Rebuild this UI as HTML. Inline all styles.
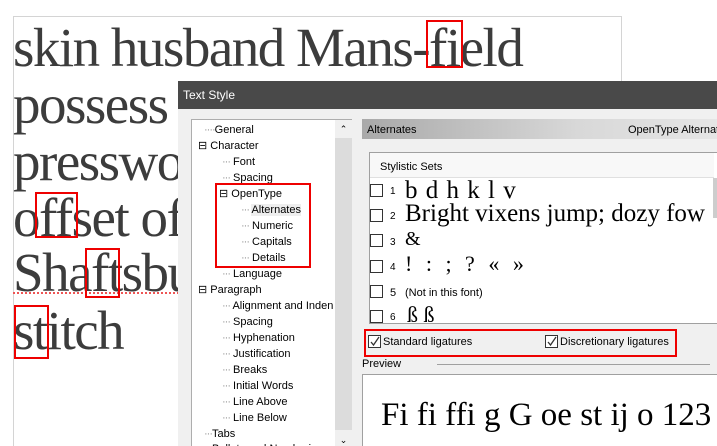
<!DOCTYPE html>
<html><head><style>
*{margin:0;padding:0;box-sizing:border-box}
html,body{width:717px;height:446px;overflow:hidden}
body{background:#fff;position:relative;font-family:"Liberation Sans",sans-serif}
.a{position:absolute;white-space:nowrap}
.doc{left:13px;top:16px;width:609px;height:440px;border:1px solid #d4d4d4;background:#fff}
.big{font-family:"Liberation Serif",serif;font-size:55px;color:#3c3c3c;letter-spacing:-1.5px;left:13px;line-height:1}
.red{border:2px solid #e00;position:absolute}
.dlg{left:178px;top:81px;width:560px;height:380px;background:#f0f0f0}
.tb{left:178px;top:81px;width:560px;height:28px;background:#494949;color:#fff;font-size:12px;padding:7px 0 0 5px}
.tree{left:191px;top:119px;width:161px;height:340px;background:#fff;border:1px solid #adadad}
.t{font-size:11px;color:#000;position:absolute;line-height:14px;white-space:nowrap}
.cb{position:absolute;width:13px;height:13px;border:1px solid #333;background:#fff}
.ser{font-family:"Liberation Serif",serif;color:#000}
.d{color:#999;letter-spacing:-1px}
</style></head><body>
<div class="a doc"></div>
<div class="a big" style="top:20px">skin husband Mans-field</div>
<div class="a big" style="top:77px">possess I</div>
<div class="a big" style="top:134px">presswo</div>
<div class="a big" style="top:190px">offset of</div>
<div class="a big" style="top:245px">Shaftsbu</div>
<div class="a big" style="top:303px">stitch</div>
<div class="a" style="left:13px;top:292px;width:166px;border-top:2px dotted #e55"></div>
<div class="red" style="left:426px;top:20px;width:37px;height:48px"></div>
<div class="red" style="left:35px;top:192px;width:43px;height:46px"></div>
<div class="red" style="left:85px;top:248px;width:35px;height:50px"></div>
<div class="red" style="left:14px;top:305px;width:35px;height:54px"></div>

<div class="a dlg"></div>
<div class="a tb">Text Style</div>
<div class="a tree">
 <div style="position:absolute;left:143px;top:0;width:17px;height:338px;background:#dcdcdc"></div>
 <div style="position:absolute;left:143px;top:0;width:17px;height:18px;background:#f0f0f0;font-size:9px;text-align:center;line-height:18px">&#8963;</div>
 <div style="position:absolute;left:143px;top:310px;width:17px;height:20px;background:#f0f0f0;font-size:9px;text-align:center;line-height:20px">&#8964;</div>
</div>
<div class="t" style="left:204px;top:123px"><span class="d">····</span>General</div>
<div class="t" style="left:198px;top:139px">⊟ Character</div>
<div class="t" style="left:222px;top:155px"><span class="d">···</span> Font</div>
<div class="t" style="left:222px;top:171px"><span class="d">···</span> Spacing</div>
<div class="t" style="left:219px;top:187px">⊟ OpenType</div>
<div class="t" style="left:241px;top:203px"><span class="d">···</span> <span style="background:#eee">Alternates</span></div>
<div class="t" style="left:241px;top:219px"><span class="d">···</span> Numeric</div>
<div class="t" style="left:241px;top:235px"><span class="d">···</span> Capitals</div>
<div class="t" style="left:241px;top:251px"><span class="d">···</span> Details</div>
<div class="t" style="left:222px;top:267px"><span class="d">···</span> Language</div>
<div class="t" style="left:198px;top:283px">⊟ Paragraph</div>
<div class="t" style="left:222px;top:299px"><span class="d">···</span> Alignment and Inden</div>
<div class="t" style="left:222px;top:315px"><span class="d">···</span> Spacing</div>
<div class="t" style="left:222px;top:331px"><span class="d">···</span> Hyphenation</div>
<div class="t" style="left:222px;top:347px"><span class="d">···</span> Justification</div>
<div class="t" style="left:222px;top:363px"><span class="d">···</span> Breaks</div>
<div class="t" style="left:222px;top:379px"><span class="d">···</span> Initial Words</div>
<div class="t" style="left:222px;top:395px"><span class="d">···</span> Line Above</div>
<div class="t" style="left:222px;top:411px"><span class="d">···</span> Line Below</div>
<div class="t" style="left:204px;top:427px"><span class="d">···</span>Tabs</div>
<div class="t" style="left:204px;top:442px"><span class="d">···</span>Bullets and Numbering</div>
<div class="red" style="left:215px;top:183px;width:96px;height:85px"></div>

<div class="a" style="left:362px;top:119px;width:360px;height:20px;background:linear-gradient(90deg,#a9a9a9,#d8d8d8 60%,#e6e6e6)"></div>
<div class="t" style="left:367px;top:123px">Alternates</div>
<div class="t" style="left:628px;top:123px">OpenType Alternates</div>

<div class="a" style="left:369px;top:152px;width:360px;height:172px;background:#fff;border:1px solid #a0a0a0"></div>
<div class="a" style="left:370px;top:153px;width:344px;height:25px;background:#f8f8f8;border-bottom:1px solid #e0e0e0"></div>
<div class="t" style="left:380px;top:160px">Stylistic Sets</div>
<div class="a" style="left:713px;top:178px;width:5px;height:40px;background:#cdcdcd"></div>
<div class="a" style="left:370px;top:178px;width:343px;height:145px;overflow:hidden">
<div class="cb" style="left:0;top:6px"></div><div class="t" style="left:20px;top:7px;font-size:10px">1</div><div class="a ser" style="left:35px;top:-1px;font-size:25px;letter-spacing:1px">b d h k l v</div>
<div class="cb" style="left:0;top:31px"></div><div class="t" style="left:20px;top:32px;font-size:10px">2</div><div class="a ser" style="left:35px;top:22px;font-size:25px">Bright vixens jump; dozy fow</div>
<div class="cb" style="left:0;top:56px"></div><div class="t" style="left:20px;top:58px;font-size:10px">3</div><div class="a ser" style="left:35px;top:50px;font-size:20px">&amp;</div>
<div class="cb" style="left:0;top:82px"></div><div class="t" style="left:20px;top:83px;font-size:10px">4</div><div class="a ser" style="left:35px;top:73px;font-size:22px;letter-spacing:4px">! : ; ? « »</div>
<div class="cb" style="left:0;top:107px"></div><div class="t" style="left:20px;top:108px">5</div><div class="t" style="left:35px;top:108px">(Not in this font)</div>
<div class="cb" style="left:0;top:132px"></div><div class="t" style="left:20px;top:133px;font-size:10px">6</div><div class="a ser" style="left:37px;top:124px;font-size:22px">ß ß</div>
</div>

<div class="cb" style="left:368px;top:335px">
<svg width="11" height="11" style="position:absolute;left:0;top:0"><path d="M2 6 L4.5 9 L10 1" stroke="#333" fill="none" stroke-width="1.3"/></svg></div>
<div class="t" style="left:383px;top:335px">Standard ligatures</div>
<div class="cb" style="left:545px;top:335px">
<svg width="11" height="11" style="position:absolute;left:0;top:0"><path d="M2 6 L4.5 9 L10 1" stroke="#333" fill="none" stroke-width="1.3"/></svg></div>
<div class="t" style="left:560px;top:335px">Discretionary ligatures</div>
<div class="red" style="left:364px;top:329px;width:313px;height:28px"></div>

<div class="t" style="left:362px;top:357px">Preview</div>
<div class="a" style="left:437px;top:364px;width:273px;border-top:1px solid #a0a0a0"></div>
<div class="a" style="left:362px;top:374px;width:360px;height:80px;background:#fff;border:1px solid #a0a0a0"></div>
<div class="a ser" style="left:381px;top:397px;font-size:33px">Fi fi ffi g G oe st ij o 123</div>
</body></html>
